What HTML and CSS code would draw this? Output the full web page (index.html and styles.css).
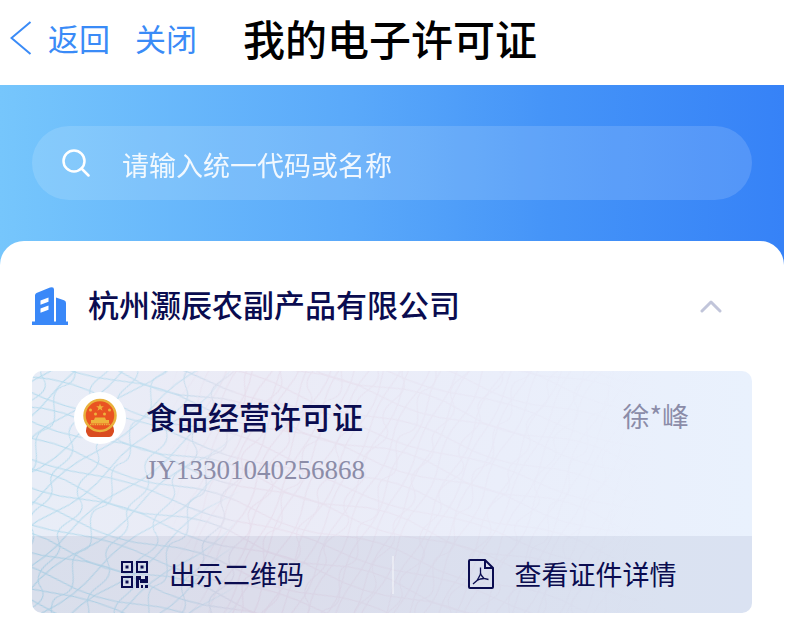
FILE: index.html
```html
<!DOCTYPE html>
<html lang="zh-CN">
<head>
  <meta charset="UTF-8" />
  <meta name="viewport" content="width=device-width, initial-scale=1.0" />
  <title>我的电子许可证</title>
  <link rel="stylesheet" href="styles.css">
</head>
<body>

  <header class="navbar">
    <a href="#" class="nav-link">
      <svg class="back-icon" viewBox="0 0 22 34" aria-hidden="true"><path d="M20.500 1 1.500 17l19 16" /></svg>
      返回
    </a>
    <a href="#" class="nav-link">关闭</a>
    <h1>我的电子许可证</h1>
  </header>

  <form class="hero" role="search">
    <label class="search">
      <svg class="search-icon" viewBox="0 0 28 28" aria-hidden="true"><circle cx="12" cy="12" r="10.500" /><path d="m19.500 19.500 7 7" /></svg>
      <input type="search" placeholder="请输入统一代码或名称" aria-label="请输入统一代码或名称" />
    </label>
  </form>

  <main class="sheet">
    <div class="company">
      <svg class="company-icon" viewBox="0 0 36 38" aria-hidden="true">
        <path fill="#3a88f8" d="M0 34.500h3V8.500Q3 6.500 4.500 6L18 .6q4-1.200 4 1.900v32h2V10.500l8 2.700q2 .8 2 2.700v18.600H36V38H0z" />
        <path fill="#fff" d="m8.500 13.500 8-3v4.300l-8 3zm0 8 8-3v4.300l-8 3z" />
      </svg>
      <h2>杭州灏辰农副产品有限公司</h2>
      <button type="button" class="collapse" aria-label="收起">
        <svg viewBox="0 0 22 14" aria-hidden="true"><path d="m2 12 9-9 9 9" /></svg>
      </button>
    </div>

    <article class="license">
      <!-- guilloche background -->
      <svg class="guilloche" viewBox="0 0 720 242" preserveAspectRatio="none" aria-hidden="true">
        <defs>
          <pattern id="waves" width="170" height="62" patternUnits="userSpaceOnUse" patternTransform="rotate(17)">
            <path d="M0 6q42-10 85 0t85 0M0 20q42 7 85 0t85 0M0 37q42-12 85 0t85 0M0 46q42 9 85 0t85 0" />
          </pattern>
          <pattern id="loops" width="83" height="96" patternUnits="userSpaceOnUse" patternTransform="rotate(24)">
            <path d="M10 0c26 14-16 33 0 48s-14 30 0 48M36 0c-20 15 17 33 0 48s18 32 0 48M64 0c15 18-19 31 0 48s-14 32 0 48" />
          </pattern>
          <pattern id="rays" width="140" height="47" patternUnits="userSpaceOnUse" patternTransform="rotate(-38)">
            <path d="M0 9q35 8 70 0t70 0M0 31q35-9 70 0t70 0" />
          </pattern>
          <pattern id="net" width="96" height="52" patternUnits="userSpaceOnUse" patternTransform="rotate(-64)">
            <path d="M0 6q24 7 48 0t48 0M0 17q24-5 48 0t48 0M0 29q24 6 48 0t48 0M0 42q24-7 48 0t48 0" />
          </pattern>
          <linearGradient id="fade-left">
            <stop offset="0" stop-color="#fff" />
            <stop offset=".22" stop-color="#aaa" />
            <stop offset=".29" stop-color="#000" />
          </linearGradient>
          <linearGradient id="fade-mid">
            <stop offset=".18" stop-color="#000" />
            <stop offset=".3" stop-color="#fff" />
            <stop offset=".52" stop-color="#999" />
            <stop offset=".86" stop-color="#000" />
          </linearGradient>
          <mask id="mask-left"><rect width="720" height="242" fill="url(#fade-left)" /></mask>
          <mask id="mask-mid"><rect width="720" height="242" fill="url(#fade-mid)" /></mask>
        </defs>
        <g class="lines-cyan" mask="url(#mask-left)">
          <rect width="720" height="242" fill="url(#waves)" />
          <rect width="720" height="242" fill="url(#loops)" />
          <rect width="720" height="242" fill="url(#rays)" />
        </g>
        <g class="lines-mauve" mask="url(#mask-mid)">
          <rect width="720" height="242" fill="url(#net)" />
          <rect width="720" height="242" fill="url(#waves)" />
          <rect width="720" height="242" fill="url(#loops)" />
        </g>
      </svg>

      <div class="license-body">
        <svg class="emblem" viewBox="0 0 52 52" aria-hidden="true">
          <circle cx="26" cy="26" r="26" fill="#fff" />
          <path fill="#d94c20" d="M13 34h26q2 5 0 8-1 3-4 3H17q-3 0-4-3-2-3 0-8z" />
          <circle cx="26" cy="23.500" r="15.500" fill="#e95422" stroke="#e9b13c" stroke-width="2.500" />
          <path fill="#eeb33b" d="m26 11.500 1 2.700h2.900l-2.300 1.700.9 2.800-2.500-1.700-2.500 1.700.9-2.800-2.300-1.700H25zM20 28l1-2.500h10l1 2.500h3v3.500H17V28z" />
          <g fill="#eeb33b"><circle cx="16.500" cy="18" r="1.500" /><circle cx="35.500" cy="18" r="1.500" /><circle cx="21.500" cy="22" r="1.500" /><circle cx="30.500" cy="22" r="1.500" /></g>
          <path fill="none" stroke="#eeb33b" stroke-width="1.500" stroke-dasharray="1.500 .8" d="M16 32.500h20" />
        </svg>
        <div class="license-info">
          <h3>食品经营许可证</h3>
          <p class="license-no">JY13301040256868</p>
        </div>
        <span class="holder">徐*峰</span>
      </div>

      <div class="actions">
        <button type="button" class="action">
          <svg class="qr-icon" viewBox="0 0 28 28" aria-hidden="true">
            <path fill="none" stroke="#0a0c50" stroke-width="2" d="M2 2h10v10H2zM17 2h10v10H17zM2 17h10v10H2z" />
            <path fill="#0a0c50" d="M5.500 5.500h3v3h-3zm15 0h3v3h-3zm-15 15h3v3h-3zM16 16h5v3h4v-3h3v7h-8v-3h-1v8h-3zm5 9h2v3h-2zm4 0h3v3h-3z" />
          </svg>
          出示二维码
        </button>
        <button type="button" class="action">
          <svg class="pdf-icon" viewBox="0 0 26 30" aria-hidden="true">
            <path stroke-width="2" d="M2 1h15l8 8v19q0 1-1 1H2q-1 0-1-1V2q0-1 1-1zM17 1v8h8" />
            <path stroke-width="1.300" d="M12.500 8.500v5q0 1.500 1 3l2.500 3 4.500 1M12.500 14q0 2-1.500 4l-2 3.500-4 3.500M9 21.500l3.500-1.500 3.500-.5" />
          </svg>
          查看证件详情
        </button>
      </div>
    </article>
  </main>

</body>
</html>
```
FILE: styles.css
```css
:root {
  --blue: #3a8bf7;
  --navy: #0a0c50;
  --muted: #8b8ca8;
}
* {
  box-sizing: border-box;
}
body {
  margin: 0 1px 0 0;
  font-family: "Noto Sans CJK SC", sans-serif;
  background: #fff;
  color: var(--navy);
}
h1, h2, h3, p {
  margin: 0;
}
button {
  padding: 0;
  border: none;
  background: none;
  color: inherit;
  font: inherit;
  cursor: pointer;
}
svg {
  display: block;
  flex: none;
}

/* Top bar */
.navbar {
  display: flex;
  align-items: center;
  height: 85px;
  padding: 0 10px 10px;
}
.nav-link {
  display: flex;
  align-items: center;
  gap: 16px;
  margin-right: 25px;
  color: var(--blue);
  font-size: 31px;
  line-height: 40px;
  text-decoration: none;
}
.back-icon {
  width: 22px;
  height: 34px;
  fill: none;
  stroke: var(--blue);
  stroke-width: 2;
}
.navbar h1 {
  margin-left: 21px;
  color: #000;
  font-size: 42px;
  font-weight: 500;
  line-height: 60px;
}

/* Search */
.hero {
  padding: 41px 32px 65px;
  background: linear-gradient(to right, #76c6fc, #5aa9fa 45%, #4594f8 70%, #3682f7);
}
.search {
  display: flex;
  align-items: center;
  gap: 32px;
  height: 74px;
  padding: 0 30px;
  border-radius: 37px;
  background: rgba(255, 255, 255, 0.14);
}
.search-icon {
  width: 28px;
  height: 28px;
  fill: none;
  stroke: #fff;
  stroke-width: 2.5;
  stroke-linecap: round;
}
.search input {
  flex: 1;
  min-width: 0;
  height: 100%;
  padding: 2px 0 0;
  border: none;
  outline: none;
  background: none;
  color: #fff;
  font: 27px "Noto Sans CJK SC", sans-serif;
}
.search input::placeholder {
  color: #fff;
  opacity: 0.9;
}

/* Company */
.sheet {
  margin-top: -24px;
  padding: 0 32px 20px;
  border-radius: 24px 24px 0 0;
  background: #fff;
}
.company {
  display: flex;
  align-items: center;
  height: 130px;
}
.company-icon {
  width: 36px;
  height: 38px;
}
.company h2 {
  flex: 1;
  margin-left: 20px;
  padding-bottom: 4px;
  font-size: 31px;
  font-weight: 500;
  line-height: 40px;
}
.collapse {
  padding: 8px;
  margin-right: 22px;
}
.collapse svg {
  width: 22px;
  height: 14px;
  fill: none;
  stroke: #c1c5da;
  stroke-width: 3;
  stroke-linecap: round;
  stroke-linejoin: round;
}

/* License card */
.license {
  position: relative;
  overflow: hidden;
  border-radius: 10px;
  background: linear-gradient(to right, #e8edf7, #ebebf6 30%, #eaeefa 65%, #e9f1fd);
}
.guilloche {
  position: absolute;
  inset: 0;
  width: 100%;
  height: 100%;
}
.guilloche path {
  fill: none;
  stroke: #59bbdc;
  stroke-width: 1;
}
.lines-cyan {
  opacity: 0.38;
}
.lines-mauve {
  opacity: 0.16;
  filter: hue-rotate(130deg) saturate(0.5);
}
.license-body {
  position: relative;
  display: flex;
  align-items: flex-start;
  height: 165px;
  padding: 21px 63px 0 42px;
}
.emblem {
  width: 52px;
  height: 52px;
}
.license-info {
  flex: 1;
  margin-left: 20px;
}
.license h3 {
  font-size: 31px;
  font-weight: 500;
  line-height: 48px;
}
.license-no {
  color: var(--muted);
  font-family: "Liberation Serif", serif;
  font-size: 27px;
  line-height: 60px;
}
.holder {
  color: var(--muted);
  font-size: 27px;
  line-height: 48px;
}
.actions {
  position: relative;
  display: flex;
  height: 77px;
  background: rgba(20, 30, 90, 0.065);
}
.action {
  display: flex;
  flex: 1;
  align-items: center;
  justify-content: center;
  gap: 21px;
  padding-bottom: 2px;
  font-size: 27px;
}
.action + .action {
  background: linear-gradient(rgba(255, 255, 255, 0.4), rgba(255, 255, 255, 0.4)) left center / 2px 38px no-repeat;
}
.qr-icon {
  width: 28px;
  height: 28px;
}
.pdf-icon {
  width: 26px;
  height: 30px;
  fill: none;
  stroke: var(--navy);
}
```
